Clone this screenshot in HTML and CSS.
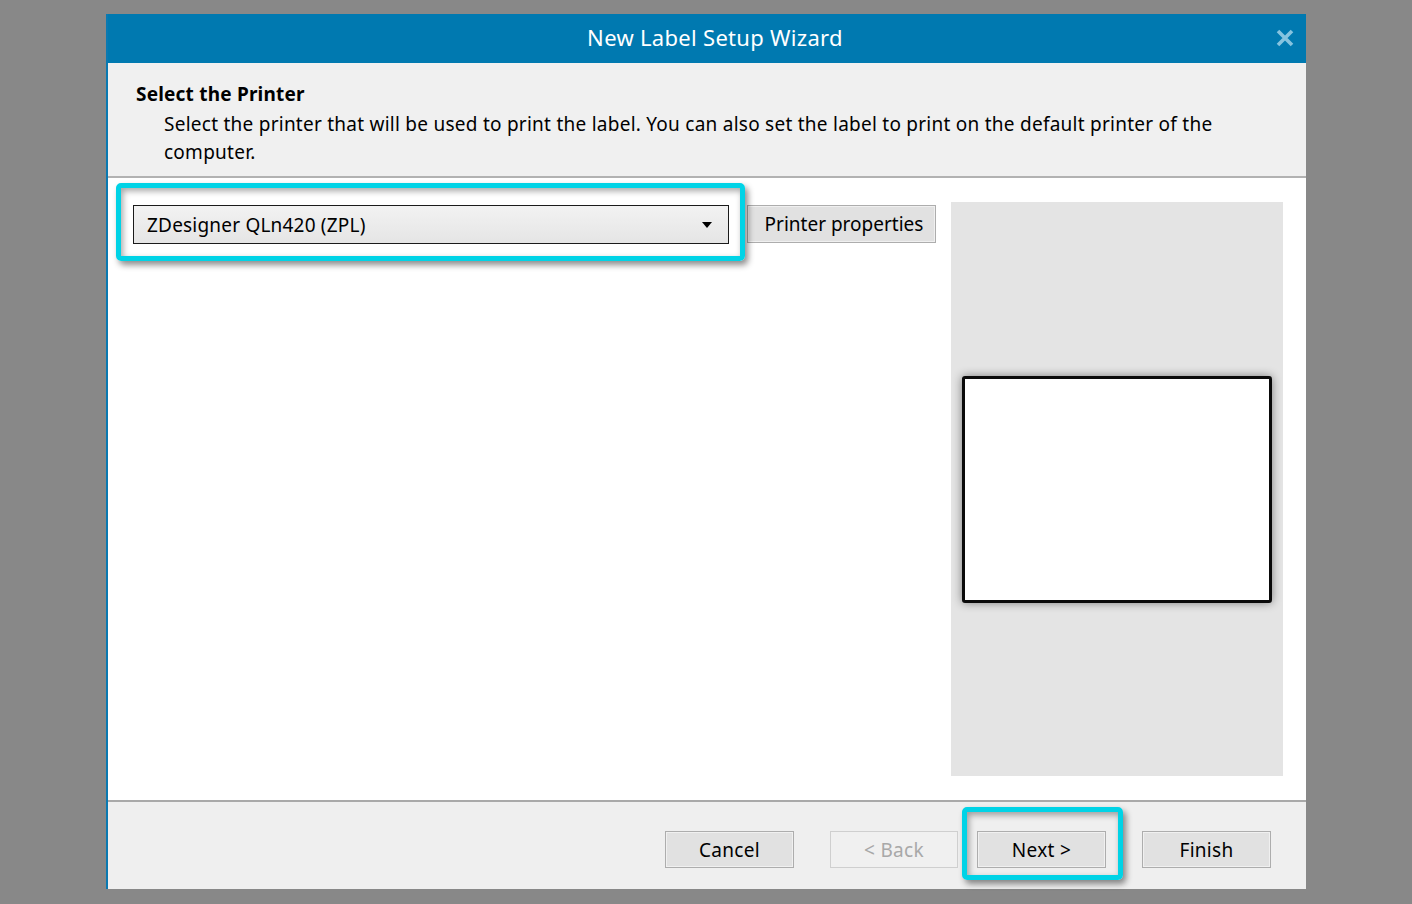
FILE: index.html
```html
<!DOCTYPE html>
<html lang="en">
<head>
<meta charset="utf-8">
<title>New Label Setup Wizard</title>
<link rel="stylesheet" href="styles.css">
</head>
<body>
<div class="dialog">
  <div class="titlebar">
    <span class="title">New Label Setup Wizard</span>
    <span class="close" aria-label="Close">
      <svg width="20" height="20" viewBox="0 0 20 20"><path d="M3 3 L17 17 M17 3 L3 17" stroke="#86c3df" stroke-width="3.6" stroke-linecap="butt"/></svg>
    </span>
  </div>
  <div class="header">
    <div class="heading">Select the Printer</div>
    <div class="desc">Select the printer that will be used to print the label. You can also set the label to print on the default printer of the<br>computer.</div>
  </div>
  <div class="content">
    <div class="left">
      <div class="printer-row">
        <div class="combo-wrap">
          <div class="combo">
            <span class="combo-text">ZDesigner QLn420 (ZPL)</span>
            <span class="arrow"></span>
          </div>
          <div class="highlight hl-combo"></div>
        </div>
        <button class="btn btn-props">Printer properties</button>
      </div>
    </div>
    <div class="preview">
      <div class="label-card"></div>
    </div>
  </div>
  <div class="footer">
    <button class="btn btn-foot btn-cancel">Cancel</button>
    <button class="btn btn-foot btn-back" disabled>&lt; Back</button>
    <div class="next-wrap">
      <button class="btn btn-foot btn-next">Next &gt;</button>
      <div class="highlight hl-next"></div>
    </div>
    <button class="btn btn-foot btn-finish">Finish</button>
  </div>
</div>
</body>
</html>
```

FILE: styles.css
```css
* { box-sizing: border-box; }
html, body { margin: 0; padding: 0; }
body {
  background: #888888;
  width: 1412px;
  height: 904px;
  overflow: hidden;
  font-family: "Noto Sans", "Open Sans", sans-serif;
  color: #000;
}
.dialog {
  margin: 14px 0 0 106px;
  width: 1200px;
  height: 875px;
  border-left: 2px solid #0a79b1;
  display: flex;
  flex-direction: column;
  background: #ffffff;
}
.titlebar {
  height: 49px;
  flex: none;
  background: #0079b0;
  display: flex;
  align-items: center;
  justify-content: center;
  position: relative;
}
.title {
  color: #ffffff;
  font-size: 22px;
  letter-spacing: 0.3px;
  margin-left: 16px;
  margin-top: -3px;
}
.close {
  position: absolute;
  right: 11px;
  top: 14px;
  width: 20px;
  height: 20px;
  display: block;
}
.close svg { display: block; }
.header {
  height: 115px;
  flex: none;
  background: #f0f0f0;
  border-bottom: 2px solid #b2b2b2;
  padding: 17px 0 0 28px;
}
.heading {
  font-weight: bold;
  font-size: 19px;
  line-height: 28px;
  letter-spacing: 0.2px;
}
.desc {
  font-size: 19px;
  line-height: 28px;
  padding-left: 28px;
  padding-top: 2px;
  letter-spacing: 0.25px;
}
.content {
  flex: 1;
  display: flex;
  padding: 24px 23px 24px 25px;
  border-bottom: 2px solid #a9a9a9;
}
.left { flex: 1; }
.printer-row {
  display: flex;
  align-items: flex-start;
  gap: 18px;
  padding-top: 3px;
}
.combo-wrap { position: relative; }
.combo {
  width: 596px;
  height: 39px;
  border: 1px solid #1a1a1a;
  background: linear-gradient(#f2f2f2, #e5e5e5);
  display: flex;
  align-items: center;
  padding-left: 13px;
  padding-right: 16px;
}
.combo-text {
  flex: 1;
  font-size: 19px;
  letter-spacing: 0.2px;
}
.arrow {
  width: 0;
  height: 0;
  border-left: 5px solid transparent;
  border-right: 5px solid transparent;
  border-top: 6px solid #000;
}
.highlight {
  position: absolute;
  border: 5px solid #00d3e6;
  border-radius: 5px;
  box-shadow: 3px 4px 6px rgba(0, 0, 0, 0.45), inset 2px 3px 6px rgba(0, 0, 0, 0.35);
  pointer-events: none;
}
.hl-combo {
  left: -17px;
  right: -16px;
  top: -22px;
  bottom: -17px;
}
.btn {
  font-family: "Noto Sans", "Open Sans", sans-serif;
  font-size: 19px;
  letter-spacing: 0.3px;
  color: #000;
  background: #e1e1e1;
  border: 1px solid #adadad;
  box-shadow: inset 0 0 0 1px #f0f0f0;
  padding: 0;
  margin: 0;
}
.btn-props {
  width: 189px;
  height: 38px;
  letter-spacing: 0;
  padding-left: 5px;
}
.preview {
  width: 332px;
  flex: none;
  background: #e4e4e4;
  display: flex;
  align-items: center;
  justify-content: center;
}
.label-card {
  width: 310px;
  height: 227px;
  background: #ffffff;
  border: 3px solid #0a0a0a;
  border-radius: 3px;
  box-shadow: 0 0 10px rgba(0, 0, 0, 0.45);
}
.footer {
  height: 87px;
  flex: none;
  background: #efefef;
  display: flex;
  align-items: flex-start;
  justify-content: flex-end;
  padding: 29px 35px 0 0;
}
.btn-foot {
  width: 129px;
  height: 37px;
  padding-top: 1px;
}
.btn-cancel { margin-right: 36px; }
.btn-back {
  width: 128px;
  color: #a8a8a8;
  background: #f0f0f0;
  border-color: #cfcfcf;
  box-shadow: none;
  margin-right: 19px;
}
.next-wrap {
  position: relative;
  margin-right: 36px;
}
.btn-next { display: block; }
.hl-next {
  left: -15px;
  right: -17px;
  top: -24px;
  bottom: -12px;
}
```
